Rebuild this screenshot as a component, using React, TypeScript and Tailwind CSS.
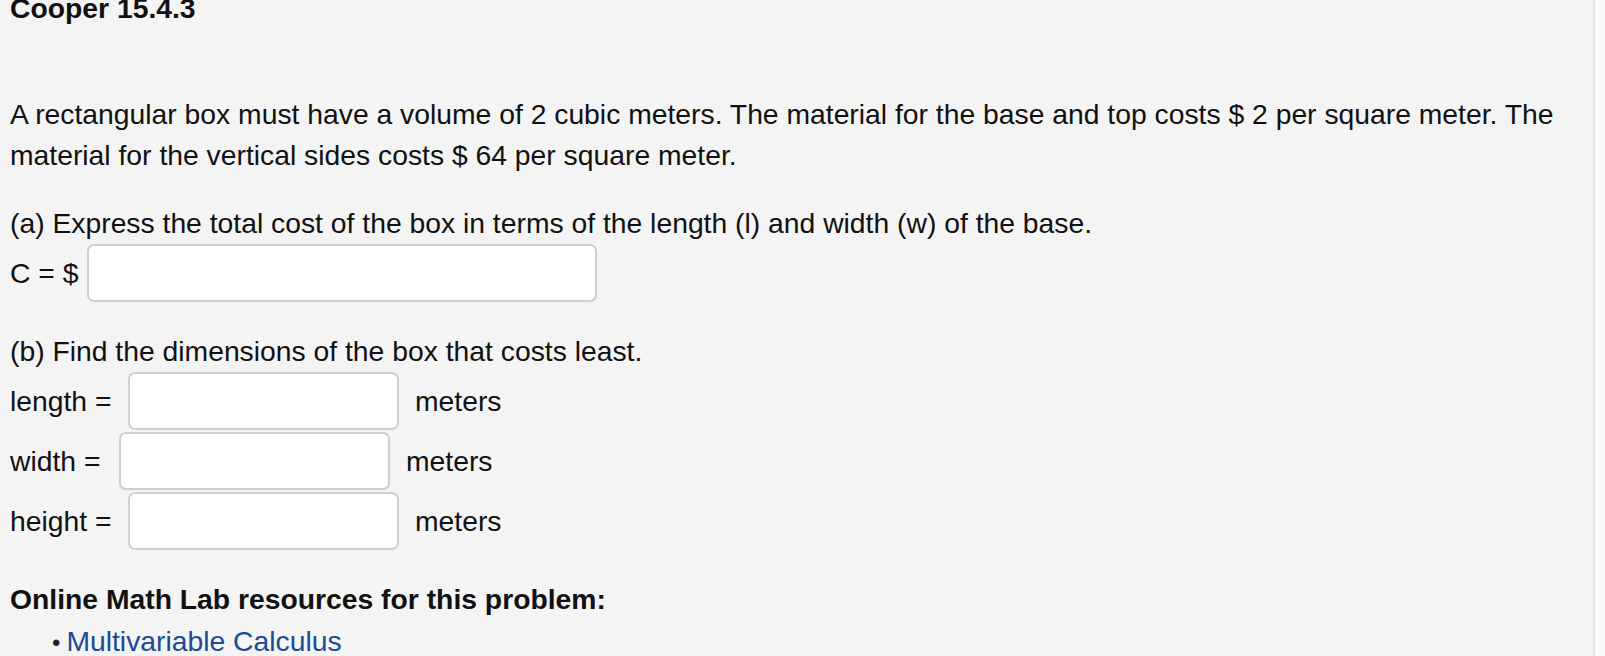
import React from "react";

const font = { fontFamily: '"Liberation Sans", Arial, Helvetica, sans-serif' };

const Blank = ({ width }: { width: string }) => (
  <input
    type="text"
    className={`${width} h-[58px] rounded-[7px] border-2 border-[#cfcfcf] bg-white outline-none`}
  />
);

export default function App() {
  return (
    <div className="flex h-[656px] w-full overflow-hidden bg-[#f9f9f9]" style={font}>
      <div className="w-[1595px] shrink-0 border-r-2 border-[#e4e4e4] bg-[#f4f4f4] pl-[10px] text-[28.3px] leading-[36px] text-[#111]">
        <h1 className="-mt-[10px] font-bold">Cooper 15.4.3</h1>

        <p className="mt-[68px] pr-[20px] leading-[41px]">
          A rectangular box must have a volume of 2 cubic meters. The material for the base and top costs $ 2 per
          square meter. The material for the vertical sides costs $ 64 per square meter.
        </p>

        <p className="mt-[29px]">(a) Express the total cost of the box in terms of the length (l) and width (w) of the base.</p>
        <div className="mt-[3px] flex items-center gap-[9px]">
          <span>C = $</span>
          <Blank width="w-[510px]" />
        </div>

        <p className="mt-[31px]">(b) Find the dimensions of the box that costs least.</p>
        <div className="mt-[3px] flex flex-col gap-[2px]">
          <div className="flex items-center">
            <span className="w-[118px]">length =</span>
            <Blank width="w-[271px]" />
            <span className="ml-[16px]">meters</span>
          </div>
          <div className="flex items-center">
            <span className="w-[109px]">width =</span>
            <Blank width="w-[271px]" />
            <span className="ml-[16px]">meters</span>
          </div>
          <div className="flex items-center">
            <span className="w-[118px]">height =</span>
            <Blank width="w-[271px]" />
            <span className="ml-[16px]">meters</span>
          </div>
        </div>

        <h2 className="mt-[31px] font-bold">Online Math Lab resources for this problem:</h2>
        <ul className="mt-[6px] pl-[42px]">
          <li className="flex items-baseline gap-[6px]">
            <span className="text-[24px] text-[#222]">•</span>
            <a href="#" className="text-[#1d4a93]">Multivariable Calculus</a>
          </li>
        </ul>
      </div>
    </div>
  );
}
